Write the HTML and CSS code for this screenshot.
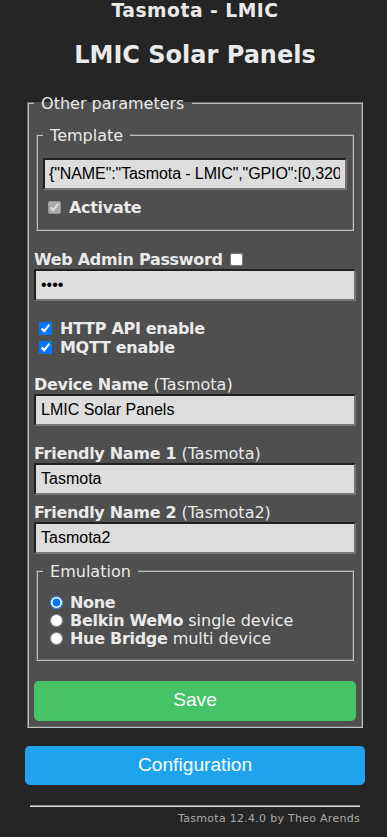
FILE: index.html
```html
<!DOCTYPE html>
<html>
<head>
<meta charset="utf-8">
<link rel="stylesheet" href="styles.css">
</head>
<body>
<div class="main">
  <div class="header">
    <h3 class="module">Tasmota - LMIC</h3>
    <h2 class="device">LMIC Solar Panels</h2>
  </div>
  <fieldset class="box">
    <legend class="lg">&nbsp;Other parameters&nbsp;</legend>
    <form class="form">
      <div class="spacer"></div>
      <fieldset class="box">
        <legend class="lg">&nbsp;Template&nbsp;</legend>
        <p class="para"><input class="field tpl" value='{"NAME":"Tasmota - LMIC","GPIO":[0,320,0,0,0,0,0,0,0,0,0,0,0,0,0,0,0,0,0,0,0,0]}'></p>
        <p class="para"><label class="check"><input type="checkbox" checked disabled><b class="bold">Activate</b></label></p>
      </fieldset>
      <div class="line"></div>
      <label class="pwlbl"><b class="bold">Web Admin Password</b><input class="inl" type="checkbox"></label>
      <input class="field" type="password" value="****">
      <div class="line"></div>
      <label class="check"><input type="checkbox" checked><b class="bold">HTTP API enable</b></label>
      <label class="check"><input type="checkbox" checked><b class="bold">MQTT enable</b></label>
      <div class="line"></div>
      <div class="lbl"><b class="bold">Device Name</b> (Tasmota)</div>
      <input class="field" value="LMIC Solar Panels">
      <div class="gap18"></div>
      <div class="lbl"><b class="bold">Friendly Name 1</b> (Tasmota)</div>
      <input class="field" value="Tasmota">
      <div class="gap8"></div>
      <div class="lbl"><b class="bold">Friendly Name 2</b> (Tasmota2)</div>
      <input class="field" value="Tasmota2">
      <div class="gap8"></div>
      <fieldset class="box">
        <legend class="lg">&nbsp;Emulation&nbsp;</legend>
        <div class="radios">
          <label class="radio"><input type="radio" name="emu" checked><span><b class="bold">None</b></span></label>
          <label class="radio"><input type="radio" name="emu"><span><b class="bold">Belkin WeMo</b> single device</span></label>
          <label class="radio"><input type="radio" name="emu"><span><b class="bold">Hue Bridge</b> multi device</span></label>
        </div>
      </fieldset>
      <div class="line2"></div>
      <button type="button" class="btn green">Save</button>
    </form>
  </fieldset>
  <div class="cfg">
    <button type="button" class="btn blue">Configuration</button>
  </div>
  <div class="footer">
    <hr class="rule">
    <a class="credit">Tasmota 12.4.0 by Theo Arends</a>
  </div>
</div>
</body>
</html>
```
FILE: styles.css
```css
html, body {
  margin: 0;
  padding: 0;
  background: #252525;
}
body {
  font-family: "DejaVu Sans", Verdana, sans-serif;
  font-size: 16px;
  color: #eaeaea;
}
.main {
  width: 340px;
  margin: 0 22px 0 25px;
}
.header {
  text-align: center;
  padding-bottom: 5px;
}
.module {
  margin: 0;
  font-size: 18.72px;
  font-weight: bold;
  line-height: normal;
  letter-spacing: 0.5px;
}
.device {
  margin: 19.92px 0;
  font-size: 24px;
  font-weight: bold;
  line-height: normal;
}
.box {
  background: #4f4f4f;
  margin: 0 2px;
  padding: 5px;
  border: 2px groove #c0c0c0;
  min-width: 0;
}
.lg {
  padding: 0 2px;
  font-weight: normal;
  line-height: normal;
}
.form {
  margin: 0;
}
.spacer {
  height: 8px;
}
.para {
  margin: 8px 0;
}
.bold {
  font-weight: bold;
  letter-spacing: -0.3px;
}
.field {
  display: block;
  width: 100%;
  box-sizing: border-box;
  margin: 0;
  padding: 5px;
  font-family: "Liberation Sans", Arial, sans-serif;
  font-size: 16px;
  line-height: normal;
  background: #dddddd;
  color: #000000;
  border: 2px inset #767676;
}
.tpl {
  padding-left: 4px;
  letter-spacing: -0.1px;
}
.line {
  height: 18.6px;
}
.line2 {
  height: 19.5px;
}
.gap18 { height: 18px; }
.gap8 { height: 8px; }
.lbl {
  display: block;
  line-height: normal;
}
.pwlbl {
  display: flex;
  align-items: center;
  height: 18.6px;
}
.inl {
  margin: 0 0 0 7px;
  width: 13px;
  height: 13px;
}
.check {
  display: flex;
  align-items: center;
  height: 18.6px;
}
.check input {
  margin: 0 8px 0 5px;
  width: 13px;
  height: 13px;
}
.radios {
  margin: 7px 0 6px;
}
.radio {
  display: flex;
  align-items: center;
  height: 18.35px;
}
.radio input {
  margin: 0 7px 0 7px;
  width: 13px;
  height: 13px;
}
.btn {
  display: block;
  width: 100%;
  border: 0;
  border-radius: 0.3rem;
  color: #faffff;
  line-height: 2.4rem;
  font-size: 1.2rem;
  font-family: "Liberation Sans", Arial, sans-serif;
  padding: 0;
  height: 40px;
  cursor: pointer;
}
.green { background: #47c266; }
.blue { background: #1fa3ec; height: 39px; }
.cfg {
  margin-top: 18px;
}
.footer {
  padding: 0 5px;
  text-align: right;
  font-size: 11px;
}
.rule {
  margin: 20px 0 5px;
  border: 0;
  border-top: 1px solid #8a8a8a;
  border-bottom: 1px solid #e0e0e0;
  height: 0;
}
.credit {
  color: #aaaaaa;
  text-decoration: none;
  letter-spacing: 0.28px;
}
```
